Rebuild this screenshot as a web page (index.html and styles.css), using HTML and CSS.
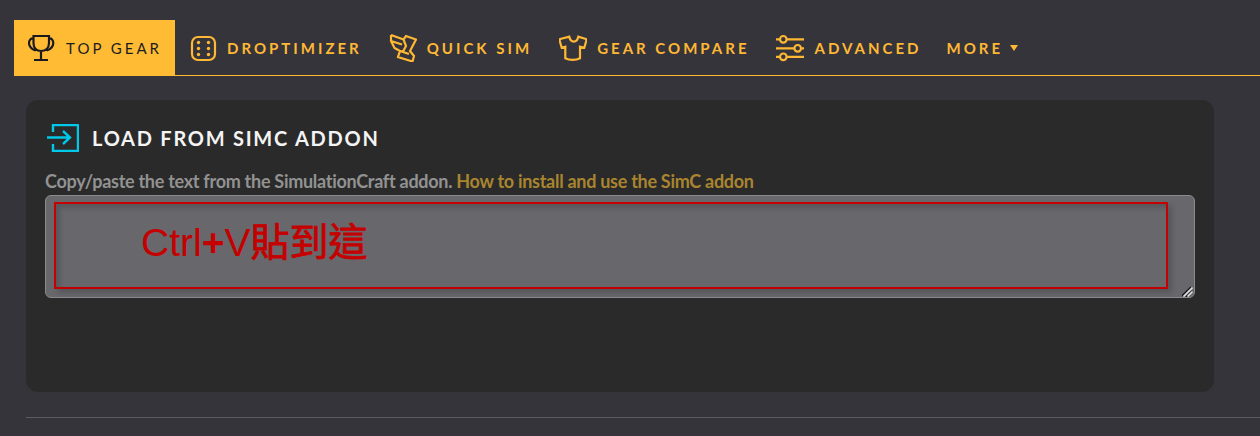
FILE: index.html
```html
<!DOCTYPE html>
<html lang="en">
<head>
<meta charset="utf-8">
<title>Top Gear</title>
<link rel="stylesheet" href="styles.css">
</head>
<body>
<nav class="tabs">
  <a class="tab tab-active">
    <svg class="ico" viewBox="0 0 28 28"><path d="M5.500 2h15.500v7c0 5-3.500 8-8 8s-7.500-3-7.500-8zM5.500 4.500C3 4 1 6 1 9c0 3 2.500 6.500 6.500 7.500M21 4.500c2.500-.5 4.300 1.500 4.300 4.500 0 3-2.500 6.500-6.500 7.500M13 17v9M6 26h14"/></svg>
    <span>TOP GEAR</span>
  </a>
  <a class="tab">
    <svg class="ico" viewBox="0 0 28 28"><rect x="3" y="3" width="23" height="23" rx="6"/><g class="dots"><circle cx="9.500" cy="8.500" r="1.700"/><circle cx="19.500" cy="8.500" r="1.700"/><circle cx="9.500" cy="14.500" r="1.700"/><circle cx="19.500" cy="14.500" r="1.700"/><circle cx="9.500" cy="20.500" r="1.700"/><circle cx="19.500" cy="20.500" r="1.700"/></g></svg>
    <span>DROPTIMIZER</span>
  </a>
  <a class="tab">
    <svg class="ico" viewBox="0 0 28 28"><path d="M2 1L14.500 5.500 17 2 27 5.500 21 17l4 5-1.500 5.500L9 23l2-6 9 3M14.500 5.500L17 12l-3 5.500M2 1v6l3.500 7L11 17M2 7l11 3.500"/></svg>
    <span>QUICK SIM</span>
  </a>
  <a class="tab">
    <svg class="ico" viewBox="-1 0 28 28"><path d="M9.300 2.700c1.500 6.500 7.500 6.500 9 0l8.400 2.600-2.400 8.400-4.300-1v11.600c-4 2.200-10.700 2.200-14.700 0V12.700l-3.600 1L-.7 5.300z"/></svg>
    <span>GEAR COMPARE</span>
  </a>
  <a class="tab tab-adv">
    <svg class="ico" viewBox="-1 0 28 28"><path d="M-1 5.300H3M10 5.300H27M-1 14.300H17M24.500 14.300H27M-1 22.800H3M10 22.800H27"/><circle cx="6.300" cy="5.300" r="3.300"/><circle cx="20.700" cy="14.300" r="3.300"/><circle cx="6.300" cy="22.800" r="3.300"/></svg>
    <span>ADVANCED</span>
  </a>
  <a class="tab tab-more">
    <span>MORE</span>
    <i class="caret"></i>
  </a>
</nav>
<main class="page">
  <section class="card">
    <h2 class="card-title">
      <svg class="load-ico" viewBox="0 0 32 28"><path d="M6 8V1h25v26H6v-7M0 13.500h23M16 7l7 6.500-7 6.500"/></svg>
      <span>LOAD FROM SIMC ADDON</span>
    </h2>
    <p class="hint">Copy/paste the text from the SimulationCraft addon. <a class="hint-link">How to install and use the SimC addon</a></p>
    <div class="input-wrap">
      <textarea class="simc-input" spellcheck="false"></textarea>
      <svg class="grip" viewBox="0 0 11 11"><path class="grip-dark" d="M0 10L9 1M4 11L10 5"/><path class="grip-light" d="M1.500 10.500L10.500 1.500M5.500 10.500L10.500 5.500"/></svg>
      <div class="annotation" lang="zh-Hant"><span>Ctrl<b>+</b>V</span><span class="cjk">貼到這</span></div>
    </div>
  </section>
  <hr class="rule">
</main>
</body>
</html>
```
FILE: styles.css
```css
* { box-sizing: border-box; }
html, body { margin: 0; height: 436px; overflow: hidden; }
body {
  background: #35343b;
  font-family: Lato, sans-serif;
}
.tabs {
  display: flex;
  align-items: stretch;
  height: 56px;
  margin: 20px 0 0 14px;
  border-bottom: 1px solid #ffbb33;
}
.tab {
  display: flex;
  align-items: center;
  gap: 10px;
  height: 56px;
  padding: 0 13px 0 14px;
  color: #ffb833;
  font-size: 15px;
  font-weight: 700;
  letter-spacing: 3px;
  white-space: nowrap;
}
.tab-active {
  background: #ffbb33;
  color: #1b1b1f;
  font-weight: 400;
}
.tab-adv {
  padding-left: 13px;
  gap: 11px;
}
.tab-more {
  margin-left: -2px;
}
.ico {
  width: 28px;
  height: 28px;
  fill: none;
  stroke: currentColor;
  stroke-width: 2.2;
}
.dots { fill: currentColor; stroke: none; }
.caret {
  width: 0;
  height: 0;
  margin-left: -3px;
  border: 4.5px solid transparent;
  border-top: 6px solid #ffb833;
  border-bottom: 0;
}
.page {
  padding: 24px 0 0 26px;
}
.card {
  width: 1188px;
  height: 292px;
  padding: 23px 19px 0;
  background: #2a2a2a;
  border-radius: 12px;
}
.card-title {
  display: flex;
  align-items: center;
  gap: 13px;
  height: 30px;
  margin: 0 0 0 2px;
  color: #f4f4f4;
  font-size: 20px;
  font-weight: 700;
  letter-spacing: 1.75px;
}
.load-ico {
  width: 32px;
  height: 28px;
  fill: none;
  stroke: #00c8e8;
  stroke-width: 2.4;
}
.hint {
  margin: 18px 0 4px;
  color: #929292;
  font-size: 18px;
  font-weight: 700;
  line-height: 20px;
  letter-spacing: -0.28px;
  white-space: nowrap;
}
.hint-link { color: #a98530; }
.input-wrap {
  position: relative;
  width: 1150px;
  height: 103px;
}
.simc-input {
  display: block;
  width: 100%;
  height: 100%;
  background: #68676c;
  border: 1px solid #8a8a8d;
  border-radius: 6px;
  outline: 0;
  resize: none;
}
.grip {
  position: absolute;
  right: 2px;
  bottom: 1px;
  width: 11px;
  height: 11px;
  fill: none;
  stroke-width: 1.6;
}
.grip-dark { stroke: #18181b; }
.grip-light { stroke: #e0e0e0; }
.annotation {
  position: absolute;
  left: 9px;
  top: 7px;
  width: 1114px;
  height: 87px;
  padding: 14px 0 0 85px;
  border: 2px solid #c40000;
  box-shadow: 4px 4px 5px rgba(0, 0, 0, 0.16), inset 4px 4px 5px rgba(0, 0, 0, 0.16);
  color: #c40000;
  font-family: "Liberation Sans", "Noto Sans CJK TC", sans-serif;
  font-size: 39px;
  line-height: 50px;
  white-space: nowrap;
}
.cjk { -webkit-text-stroke: 0.8px #c40000; }
.rule {
  height: 1px;
  margin: 25px 0 0;
  border: 0;
  background: #5c5b61;
}
```
